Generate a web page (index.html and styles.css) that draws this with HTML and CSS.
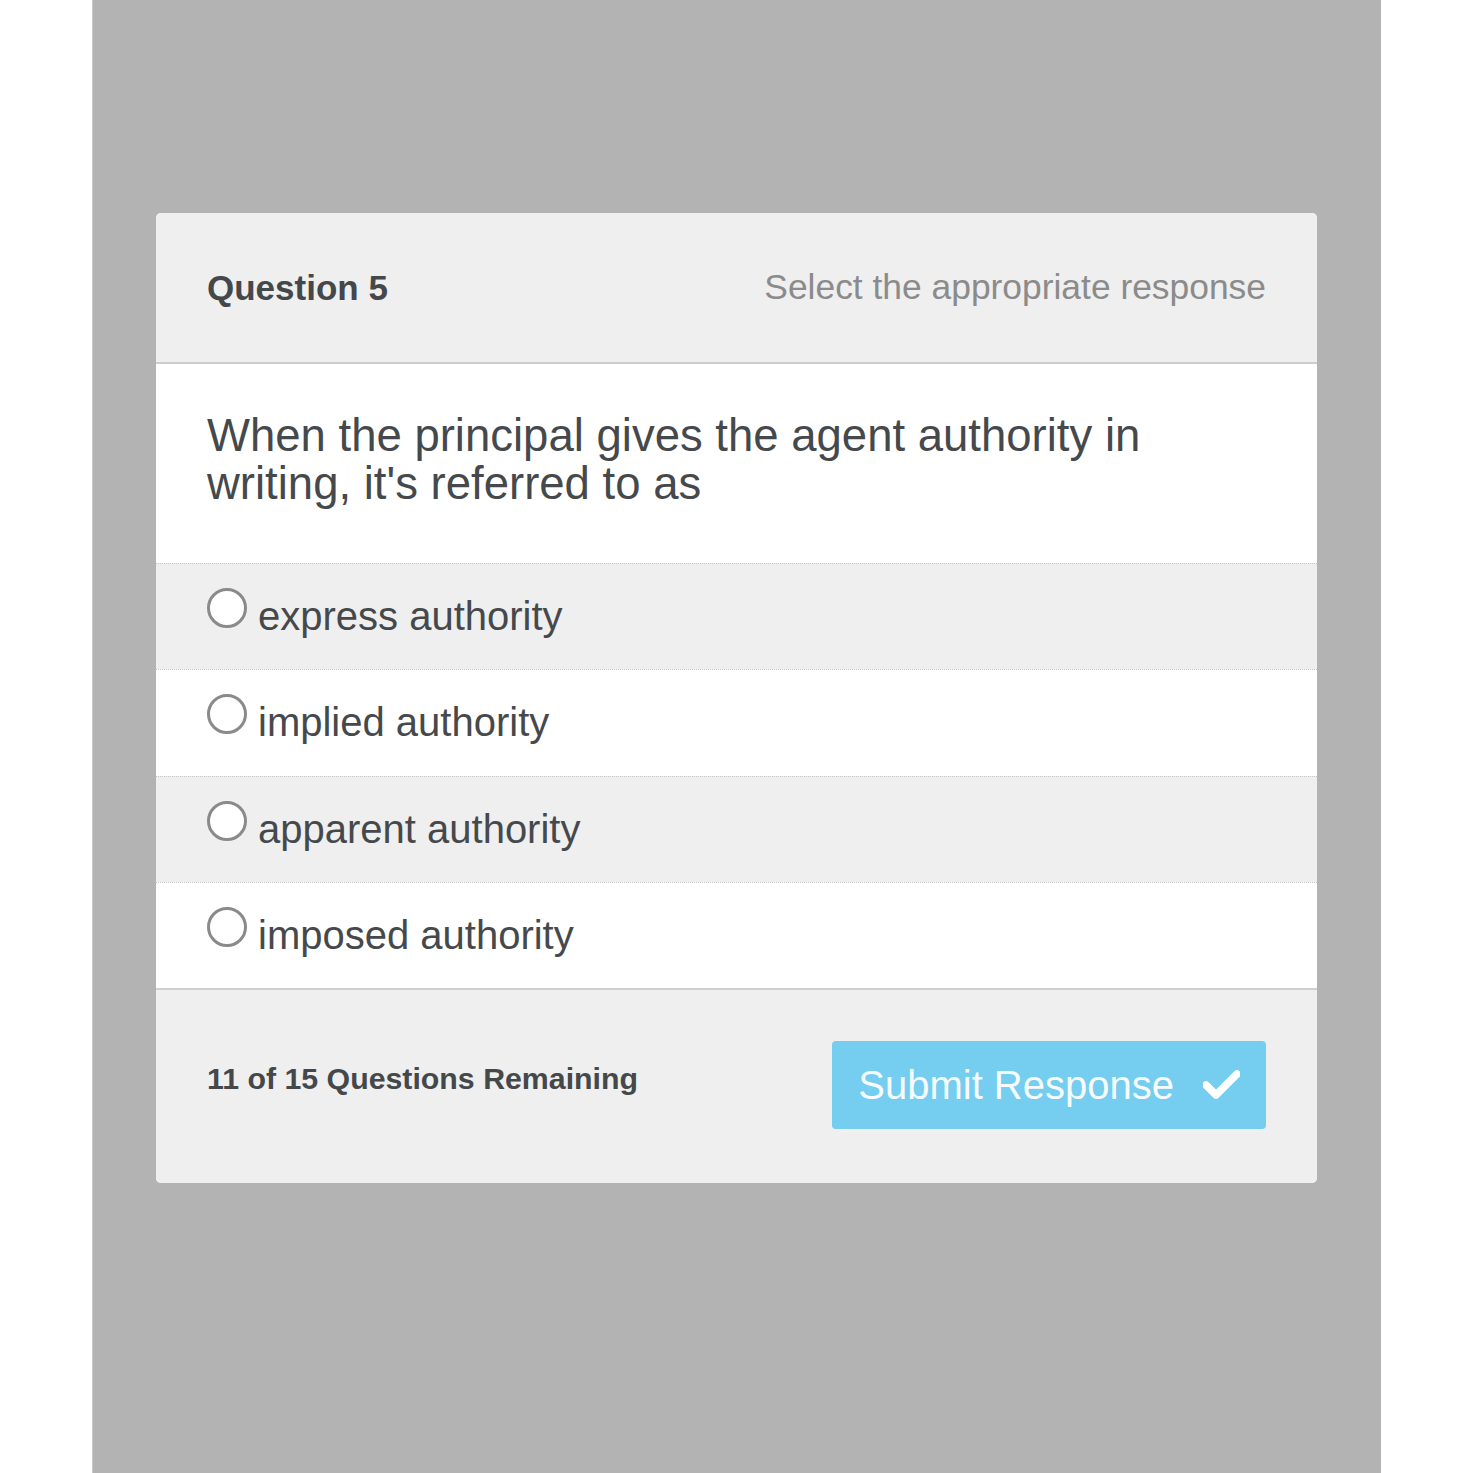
FILE: index.html
```html
<!DOCTYPE html>
<html lang="en">

<head>
    <meta charset="UTF-8">
    <title>Question 5</title>
    <link rel="stylesheet" href="styles.css">
</head>

<body>
    <!-- page column -->
    <div class="pageNode">
        <!-- quiz card -->
        <div class="quizCard">
            <div class="quizHead">
                <div class="quizNum">Question 5</div>
                <div class="quizHint">Select the appropriate response</div>
            </div>
            <div class="quizText">When the principal gives the agent authority in writing, it's referred to as</div>
            <ul class="answerList">
                <li class="answer odd"><span class="radio"></span><span class="answerText">express authority</span></li>
                <li class="answer"><span class="radio"></span><span class="answerText">implied authority</span></li>
                <li class="answer odd"><span class="radio"></span><span class="answerText">apparent authority</span></li>
                <li class="answer"><span class="radio"></span><span class="answerText">imposed authority</span></li>
            </ul>
            <div class="quizFoot">
                <div class="remaining">11 of 15 Questions Remaining</div>
                <div class="submitBtn">
                    <span>Submit Response</span>
                    <svg class="check" width="37" height="29" viewBox="0 0 37 29">
                        <path d="M3 15 L13 25 L34 4" fill="none" stroke="#fff" stroke-width="7.5" stroke-linecap="round" stroke-linejoin="round"/>
                    </svg>
                </div>
            </div>
        </div>
    </div>
</body>

</html>
```

FILE: styles.css
```css
* {
    margin: 0;
    padding: 0;
    list-style: none;
    box-sizing: border-box;
}

body {
    background: #fff;
    font-family: "Liberation Sans", Arial, sans-serif;
    color: #46494c;
}

.pageNode {
    width: 1289px;
    min-height: 1473px;
    margin-left: 92px;
    padding: 213px 64px 0 63px;
    background: #b3b3b3;
    border-left: 1px solid #c9c9c9;
}

.quizCard {
    width: 1161px;
    border-radius: 5px;
    overflow: hidden;
    background: #fff;
}

.quizHead {
    display: flex;
    justify-content: space-between;
    padding: 54px 51px;
    line-height: 41px;
    font-size: 35px;
    background: #efefef;
    border-bottom: 2px solid #cdcdcd;
}

.quizHead .quizNum {
    font-weight: bold;
    color: #45484b;
}

.quizHead .quizHint {
    font-size: 35.4px;
    color: #8b8b8b;
}

.quizText {
    padding: 48px 130px 55px 51px;
    font-size: 45.5px;
    line-height: 48px;
}

.answerList .answer {
    display: flex;
    align-items: flex-start;
    height: 106.25px;
    padding: 24px 51px 0;
    border-top: 1px dotted #c6c6c6;
    background: #fff;
}

.answerList .odd {
    background: #efefef;
}

.answer .radio {
    flex: none;
    width: 40px;
    height: 40px;
    margin-right: 11px;
    border: 3px solid #8a8a8a;
    border-radius: 50%;
    background: #fff;
}

.answer .answerText {
    margin-top: 5px;
    font-size: 40px;
    line-height: 46px;
}

.quizFoot {
    display: flex;
    justify-content: space-between;
    align-items: flex-start;
    padding: 51px 51px 54px;
    background: #efefef;
    border-top: 2px solid #d0d0d0;
}

.quizFoot .remaining {
    margin-top: 21px;
    font-size: 30.3px;
    line-height: 34px;
    font-weight: bold;
    color: #45484b;
}

.submitBtn {
    display: flex;
    align-items: center;
    height: 88px;
    padding: 0 26px;
    border-radius: 4px;
    background: #75cdef;
    color: #f6fcfe;
    font-size: 40px;
    line-height: 88px;
    cursor: pointer;
}

.submitBtn .check {
    margin-left: 29px;
    margin-top: -2px;
}
```
